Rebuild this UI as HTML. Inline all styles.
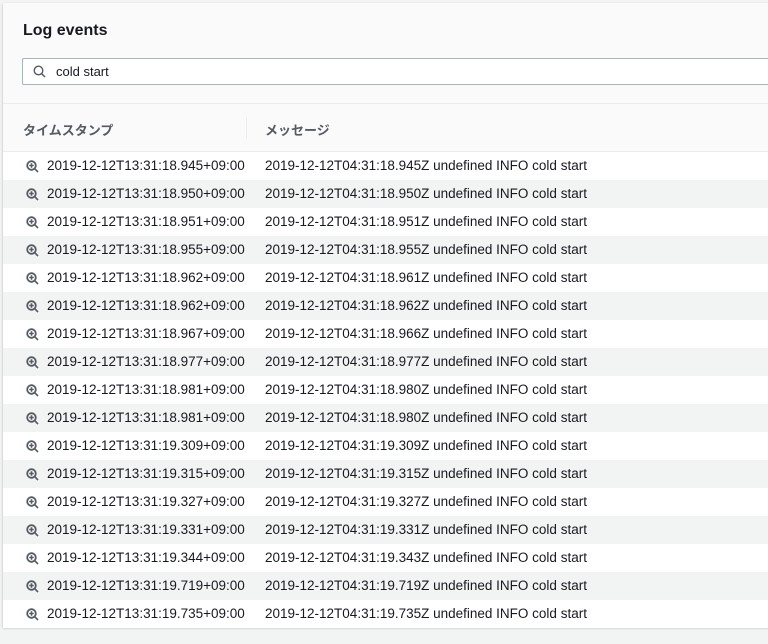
<!DOCTYPE html>
<html><head><meta charset="utf-8"><style>
body{margin:0;background:#f2f3f3;width:768px;height:644px;overflow:hidden;font-family:"Liberation Sans","Noto Sans CJK JP",sans-serif;color:#16191f}
.card{position:absolute;left:3px;top:3px;width:780px;height:624px;background:#fafafa;box-shadow:0 1px 2px rgba(0,22,40,.3)}
.title{position:absolute;left:20px;top:19px;font-size:16px;font-weight:bold}
.search{position:absolute;left:19px;top:55px;width:800px;height:27px;background:#fff;border:1px solid #aab7b8;border-radius:2px;box-sizing:border-box}
.search span{position:absolute;left:33px;top:5px;font-size:13px}
.search svg{position:absolute;left:10px;top:6px}
.div1{position:absolute;left:0;top:100px;width:100%;height:1px;background:#eaeded}
.th{position:absolute;top:101px;left:0;width:100%;height:47px;border-bottom:1px solid #eaeded}
.th span{position:absolute;top:16px;font-size:13px;font-weight:bold;color:#545b64}
.sep{position:absolute;left:243px;top:13px;width:1px;height:22px;background:#eaeded}
.rows{position:absolute;top:149px;left:0;width:100%}
.r{height:28px;position:relative;font-size:13.5px;color:#16191f;background:#fff}
.r:nth-child(even){background:#f2f3f3}
.r svg{position:absolute;left:23px;top:8px}
.r .t{position:absolute;left:44px;top:6px;white-space:nowrap}
.r .m{position:absolute;left:262px;top:6px;white-space:nowrap}
</style></head><body>
<div class="card">
<div class="title">Log events</div>
<div class="search"><svg width="13" height="13" viewBox="0 0 13 13"><circle cx="5.5" cy="5.5" r="4.3" fill="none" stroke="#545b64" stroke-width="1.4"/><path d="M8.6 8.6L12 12" stroke="#545b64" stroke-width="1.5"/></svg><span>cold start</span></div>
<div class="div1"></div>
<div class="th"><span style="left:20px">タイムスタンプ</span><div class="sep"></div><span style="left:262px">メッセージ</span></div>
<div class="rows" id="rows">
</div>
</div>
<script>
var d=[["18.945","18.945"],["18.950","18.950"],["18.951","18.951"],["18.955","18.955"],["18.962","18.961"],["18.962","18.962"],["18.967","18.966"],["18.977","18.977"],["18.981","18.980"],["18.981","18.980"],["19.309","19.309"],["19.315","19.315"],["19.327","19.327"],["19.331","19.331"],["19.344","19.343"],["19.719","19.719"],["19.735","19.735"]];
var ic='<svg width="13" height="13" viewBox="0 0 13 13"><circle cx="5.5" cy="5.5" r="4.3" fill="none" stroke="#545b64" stroke-width="1.8"/><path d="M8.6 8.6L12 12M5.5 3.3v4.4M3.3 5.5h4.4" stroke="#545b64" stroke-width="1.6"/></svg>';
var h='';d.forEach(function(x){h+='<div class="r">'+ic+'<span class="t">2019-12-12T13:31:'+x[0]+'+09:00</span><span class="m">2019-12-12T04:31:'+x[1]+'Z undefined INFO cold start</span></div>'});
document.getElementById('rows').innerHTML=h;
</script>
</body></html>
